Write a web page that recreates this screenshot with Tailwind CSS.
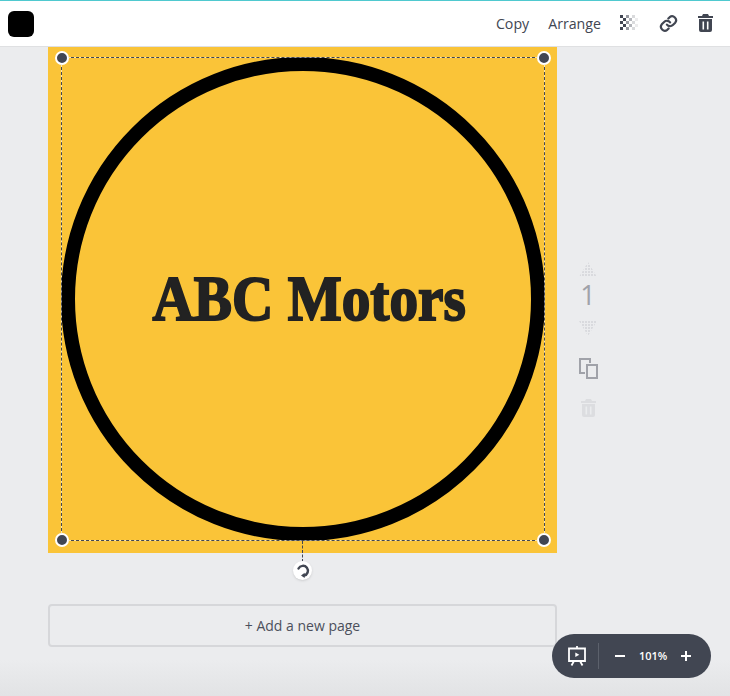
<!DOCTYPE html>
<html lang="en">
  <head>
    <meta charset="UTF-8" />
    <meta name="viewport" content="width=device-width, initial-scale=1.0" />
    <title>ABC Motors</title>
    <script src="https://cdn.jsdelivr.net/npm/@tailwindcss/browser@4"></script>
  </head>
  <body class="bg-[#ebecee] font-['Open_Sans',sans-serif]">
    <div class="relative w-[730px] h-[696px] overflow-hidden flex flex-col">
      <!-- Toolbar -->
      <header class="relative z-10 h-[47px] shrink-0 bg-white border-t border-t-[#4fc9cf] border-b border-b-[#dfe0e2] flex items-center pl-2 pr-[17px] text-[14.2px] text-[#414652]">
        <div class="w-[26px] h-[26px] rounded-[6px] bg-black"></div>
        <div class="ml-auto flex items-center">
          <span>Copy</span>
          <span class="ml-[19px]">Arrange</span>
          <svg class="ml-[19px] w-[18px] h-[16px]" viewBox="0 0 18 16">
            <g fill="#414652">
              <rect x="0" y="0" width="3" height="3" /><rect x="6" y="0" width="3" height="3" opacity=".55" /><rect x="12" y="0" width="3" height="3" opacity=".2" />
              <rect x="3" y="3" width="3" height="3" /><rect x="9" y="3" width="3" height="3" opacity=".4" /><rect x="15" y="3" width="3" height="3" opacity=".1" />
              <rect x="0" y="6" width="3" height="3" /><rect x="6" y="6" width="3" height="3" opacity=".55" /><rect x="12" y="6" width="3" height="3" opacity=".2" />
              <rect x="3" y="9" width="3" height="3" /><rect x="9" y="9" width="3" height="3" opacity=".4" /><rect x="15" y="9" width="3" height="3" opacity=".1" />
              <rect x="0" y="12" width="3" height="3" /><rect x="6" y="12" width="3" height="3" opacity=".55" /><rect x="12" y="12" width="3" height="3" opacity=".2" />
            </g>
          </svg>
          <svg class="ml-[21px] w-[19px] h-[19px]" viewBox="0 0 24 24" fill="none" stroke="#414652" stroke-width="2.800" stroke-linecap="round" stroke-linejoin="round">
            <path d="M10 13.500a5 5 0 0 0 7.500.5l3-3a5 5 0 0 0-7-7l-1.700 1.700" />
            <path d="M14 10.500a5 5 0 0 0-7.500-.5l-3 3a5 5 0 0 0 7 7l1.700-1.700" />
          </svg>
          <svg class="ml-[20px] w-[15px] h-[18px]" viewBox="0 0 15 18" fill="#414652">
            <path d="M5 0h5l1 2h4v2H0V2h4z" />
            <path d="M1 5h13v11a2 2 0 0 1-2 2H3a2 2 0 0 1-2-2zM4.500 7.500v8h1.600v-8zm4.400 0v8h1.600v-8z" fill-rule="evenodd" />
          </svg>
        </div>
      </header>

      <main class="flex pl-12">
        <!-- Page -->
        <section class="relative w-[509px] h-[506px] bg-[#fac438] flex items-center justify-center">
          <div class="absolute left-[13px] top-[10px] w-[484px] h-[484px] rounded-full border-[14px] border-black"></div>
          <h1 class="relative z-[1] top-[-1px] left-[7px] scale-x-[0.895] text-[#222222] font-['Liberation_Serif',serif] font-bold text-[64px] leading-none whitespace-nowrap [-webkit-text-stroke:2px_#222222]">ABC Motors</h1>

          <!-- Selection -->
          <div class="absolute left-[13px] top-[10px] w-[484px] h-[484px] border border-white/60"></div>
          <div class="absolute left-[13px] top-[10px] w-[484px] h-[484px] border border-dashed border-[#414652]"></div>
          <span class="absolute left-[7px] top-[4px] w-[14px] h-[14px] rounded-full bg-[#414652] border-2 border-white"></span>
          <span class="absolute left-[489px] top-[4px] w-[14px] h-[14px] rounded-full bg-[#414652] border-2 border-white"></span>
          <span class="absolute left-[7px] top-[486px] w-[14px] h-[14px] rounded-full bg-[#414652] border-2 border-white"></span>
          <span class="absolute left-[489px] top-[486px] w-[14px] h-[14px] rounded-full bg-[#414652] border-2 border-white"></span>
          <div class="absolute left-[254px] top-[494px] h-[21px] border-l border-dashed border-[#414652]"></div>
          <div class="absolute left-[245px] top-[514px] w-[19px] h-[19px] rounded-full bg-white shadow-sm flex items-center justify-center">
            <svg class="w-[14px] h-[14px]" viewBox="0 0 14 14" fill="none" stroke="#414652" stroke-width="2.400" stroke-linecap="round">
              <path d="M2.500 4.500A5 5 0 1 1 8 11.700" />
              <path d="M8.700 8.800v5.200L5 11.400z" fill="#414652" stroke="none" />
            </svg>
          </div>
        </section>

        <!-- Page controls -->
        <aside class="ml-[21px] w-5 flex flex-col items-center pt-[215px]">
          <svg class="w-[18px] h-[15px]" viewBox="0 0 18 15">
            <defs>
              <pattern id="dots" width="3" height="3" patternUnits="userSpaceOnUse">
                <rect width="2" height="2" fill="#d9dade" />
              </pattern>
            </defs>
            <path d="M9 0l9 15H0z" fill="url(#dots)" />
          </svg>
          <span class="mt-[1px] text-[27px] leading-[34px] text-[#a0a2a9]">1</span>
          <svg class="mt-[9px] w-[18px] h-[15px]" viewBox="0 0 18 15">
            <path d="M0 0h18L9 15z" fill="url(#dots)" />
          </svg>
          <svg class="mt-[22px] w-[19px] h-[21px]" viewBox="0 0 19 21" fill="none" stroke="#a0a2a9" stroke-width="2">
            <path d="M6 15H1V1h10v4" />
            <rect x="8" y="7" width="10" height="13" />
          </svg>
          <svg class="mt-[20px] w-[15px] h-[18px]" viewBox="0 0 15 18" fill="#dcdde0">
            <path d="M5 0h5l1 2h4v2H0V2h4z" />
            <path d="M1 5h13v11a2 2 0 0 1-2 2H3a2 2 0 0 1-2-2zM4.500 7.500v8h1.600v-8zm4.400 0v8h1.600v-8z" fill-rule="evenodd" />
          </svg>
        </aside>
      </main>

      <button class="ml-12 mt-[51px] w-[509px] h-[43px] rounded-[4px] border-2 border-[#d6d7da] text-[14px] text-[#4b505c]">+ Add a new page</button>

      <!-- Bottom fade -->
      <div class="absolute left-0 right-0 bottom-0 h-[36px] bg-gradient-to-b from-[#ebecee] to-[#e2e3e5]"></div>

      <!-- Zoom controls -->
      <div class="absolute left-[552px] top-[634px] w-[159px] h-[44px] rounded-full bg-[#414652] flex items-center text-white">
        <svg class="ml-4 w-[18px] h-[20px]" viewBox="0 0 18 20" fill="none" stroke="white" stroke-width="1.800">
          <path d="M9 0v2M1 2.500h16V15H1zM6 15l-2.500 4.500M12 15l2.500 4.500" />
          <path d="M7.300 6.500l4 2.300-4 2.300z" fill="white" stroke="none" />
        </svg>
        <span class="ml-[12px] w-px h-[26px] bg-[#5c616c]"></span>
        <svg class="ml-4 w-[10px] h-[10px]" viewBox="0 0 10 10" fill="white"><rect x="0" y="4" width="10" height="2" /></svg>
        <span class="ml-[14px] text-[11px] font-semibold">101%</span>
        <svg class="ml-[14px] w-[10px] h-[10px]" viewBox="0 0 10 10" fill="white"><path d="M4 0h2v4h4v2H6v4H4V6H0V4h4z" /></svg>
      </div>
    </div>
  </body>
</html>
